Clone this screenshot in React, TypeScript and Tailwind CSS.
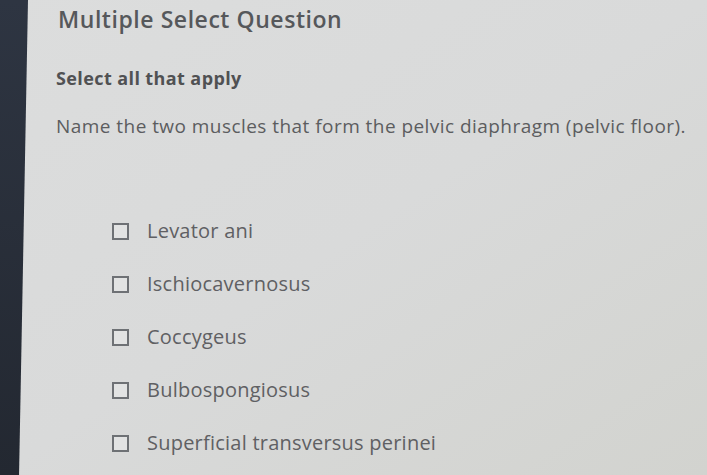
export default function App() {
  const options = [
    "Levator ani",
    "Ischiocavernosus",
    "Coccygeus",
    "Bulbospongiosus",
    "Superficial transversus perinei",
  ];
  return (
    <div className="flex h-[475px] w-[707px] overflow-hidden bg-gradient-to-br from-[#dcdddd] via-[#d9dada] to-[#d2d3cf] font-['Open_Sans',sans-serif] text-[#5a5b5d] [font-variant-ligatures:none]">
      <div className="w-[28px] shrink-0 bg-gradient-to-b from-[#2e3542] to-[#232831] [clip-path:polygon(0_0,100%_0,68%_100%,0_100%)]" />
      <main className="flex-1 pl-[28px]">
        <h1 className="ml-[2px] pt-[4px] text-[23px] font-semibold leading-[30px] tracking-[0.55px] text-[#56585b]">
          Multiple Select Question
        </h1>
        <p className="mt-[32px] text-[18px] font-bold leading-[24px] tracking-[0.4px] text-[#505153]">
          Select all that apply
        </p>
        <p className="mt-[24px] text-[19px] leading-[24px] tracking-[0.45px] text-[#5c5d5f]">
          Name the two muscles that form the pelvic diaphragm (pelvic floor).
        </p>
        <ul className="mt-[81px] flex flex-col gap-[29px] pl-[56px]">
          {options.map((o) => (
            <li key={o} className="flex items-center gap-[18px]">
              <span className="h-[17px] w-[17px] shrink-0 border-2 border-[#6e7175] bg-[#e2e3e3]" />
              <span className="text-[20px] leading-[24px] tracking-[0.23px] text-[#5f6063]">{o}</span>
            </li>
          ))}
        </ul>
      </main>
    </div>
  );
}
